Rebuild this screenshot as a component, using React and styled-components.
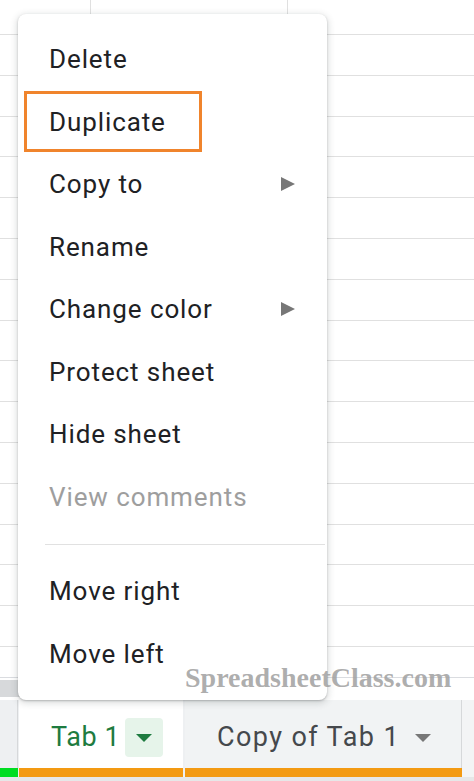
import React from "react";
import styled, { createGlobalStyle } from "styled-components";

const Global = createGlobalStyle`
  html, body { margin: 0; padding: 0; background: #fff; }
  body { font-family: Roboto, "Noto Sans", sans-serif; }
  * { box-sizing: border-box; }
`;

const Page = styled.div`
  position: relative;
  width: 474px;
  height: 781px;
  overflow: hidden;
  display: flex;
  flex-direction: column;
  background: #fff;
`;

const Sheet = styled.div`
  display: grid;
  grid-template-columns: 91px 197px 1fr;
  grid-template-rows: 35px repeat(15, 40.8px) 1fr;
  height: 677px;
`;

const Cell = styled.div`
  border-bottom: ${(p) => (p.$last ? "none" : "1px solid #e0e0e0")};
  border-right: ${(p) => (p.$divider ? "1px solid #e0e0e0" : "none")};
`;

const ScrollBand = styled.div`
  height: 23px;
  border-top: 1px solid #dadce0;
  display: flex;
  align-items: stretch;
  padding: 2px 0 3px;
`;

const Thumb = styled.div`
  width: 140px;
  background: #d7d9db;
`;

const TabBar = styled.div`
  display: flex;
  height: 81px;
  background: #eef0f2;
  border-bottom: 4px solid #e6e7e8;
`;

const TabSlot = styled.div`
  display: flex;
  flex-direction: column;
  width: ${(p) => p.$w}px;
  margin-left: ${(p) => p.$ml || 0}px;
  flex: ${(p) => (p.$grow ? "1" : "none")};
`;

const TabBody = styled.div`
  flex: 1;
  display: flex;
  align-items: center;
  gap: ${(p) => p.$gap || 0}px;
  padding-left: ${(p) => p.$pl || 0}px;
  padding-top: 7px;
  background: ${(p) => p.$bg};
  border-right: ${(p) => (p.$edge ? "1px solid #d6d8da" : "none")};
`;

const Strip = styled.div`
  height: 9px;
  background: ${(p) => p.$color};
`;

const TabLabel = styled.span`
  font-family: Roboto, sans-serif;
  font-size: 27px;
  letter-spacing: ${(p) => p.$ls}px;
  line-height: 1;
  color: ${(p) => p.$color};
  white-space: nowrap;
`;

const DropButton = styled.div`
  width: 38px;
  height: 39px;
  border-radius: 4px;
  display: flex;
  align-items: center;
  justify-content: center;
  background: ${(p) => p.$bg || "transparent"};
`;

const Menu = styled.div`
  position: absolute;
  left: 18px;
  top: 14px;
  width: 309px;
  height: 686px;
  background: #fff;
  border-radius: 8px;
  box-shadow: 0 2px 6px 2px rgba(60, 64, 67, 0.15),
    0 1px 2px 0 rgba(60, 64, 67, 0.3);
  padding: 14px 0 15px;
  display: flex;
  flex-direction: column;
`;

const Item = styled.div`
  position: relative;
  height: 62.5px;
  display: flex;
  align-items: center;
  justify-content: space-between;
  padding: 0 32px 0 31px;
  font-family: Roboto, sans-serif;
  font-size: 26px;
  letter-spacing: 0.9px;
  line-height: 62.5px;
  color: ${(p) => (p.$disabled ? "#9e9e9e" : "#202124")};
`;

const Highlight = styled.div`
  position: absolute;
  left: 6px;
  top: 0px;
  width: 178px;
  height: 61px;
  border: 3px solid #f0842c;
`;

const Separator = styled.div`
  height: 2px;
  background: #e1e1e1;
  margin: 16px 2px 15px 27px;
`;

const Watermark = styled.div`
  position: absolute;
  left: 185px;
  top: 664px;
  font-family: "Liberation Serif", "Times New Roman", serif;
  font-weight: bold;
  font-size: 28px;
  line-height: 28px;
  color: rgba(160, 160, 160, 0.85);
  white-space: nowrap;
`;

const Arrow = () => (
  <svg width="14" height="14" viewBox="0 0 14 14">
    <path d="M0 0 L14 7 L0 14 Z" fill="#777" />
  </svg>
);

const Caret = ({ color }) => (
  <svg width="16" height="8" viewBox="0 0 16 8">
    <path d="M0 0 H16 L8 8 Z" fill={color} />
  </svg>
);

const items = [
  { label: "Delete" },
  { label: "Duplicate", highlight: true },
  { label: "Copy to", sub: true },
  { label: "Rename" },
  { label: "Change color", sub: true },
  { label: "Protect sheet" },
  { label: "Hide sheet" },
  { label: "View comments", disabled: true },
];

const after = [{ label: "Move right" }, { label: "Move left" }];

export default function App() {
  const rows = Array.from({ length: 17 }, (_, r) => r);
  return (
    <>
      <Global />
      <Page>
        <Sheet>
          {rows.map((r) =>
            [0, 1, 2].map((c) => (
              <Cell key={`${r}-${c}`} $last={r === 16} $divider={c < 2} />
            ))
          )}
        </Sheet>
        <ScrollBand>
          <Thumb />
        </ScrollBand>
        <TabBar>
          <TabSlot $w={18}>
            <TabBody $bg="#eef0f2" $edge />
            <Strip $color="#00dd22" />
          </TabSlot>
          <TabSlot $w={164} $ml={1}>
            <TabBody $bg="#ffffff" $pl={32} $gap={5}>
              <TabLabel $color="#1e7b40" $ls={0.6}>Tab 1</TabLabel>
              <DropButton $bg="#e6f4ea">
                <Caret color="#1e7b40" />
              </DropButton>
            </TabBody>
            <Strip $color="#f39a12" />
          </TabSlot>
          <TabSlot $w={277} $ml={2}>
            <TabBody $bg="#f1f3f4" $pl={32} $gap={15} $edge>
              <TabLabel $color="#45484c" $ls={1.4}>Copy of Tab 1</TabLabel>
              <Caret color="#777" />
            </TabBody>
            <Strip $color="#f39a12" />
          </TabSlot>
          <TabSlot $grow>
            <TabBody $bg="#f3f4f5" />
          </TabSlot>
        </TabBar>

        <Menu>
          {items.map((it) => (
            <Item key={it.label} $disabled={it.disabled}>
              {it.highlight && <Highlight />}
              <span>{it.label}</span>
              {it.sub && <Arrow />}
            </Item>
          ))}
          <Separator />
          {after.map((it) => (
            <Item key={it.label}>
              <span>{it.label}</span>
            </Item>
          ))}
        </Menu>
        <Watermark>SpreadsheetClass.com</Watermark>
      </Page>
    </>
  );
}
